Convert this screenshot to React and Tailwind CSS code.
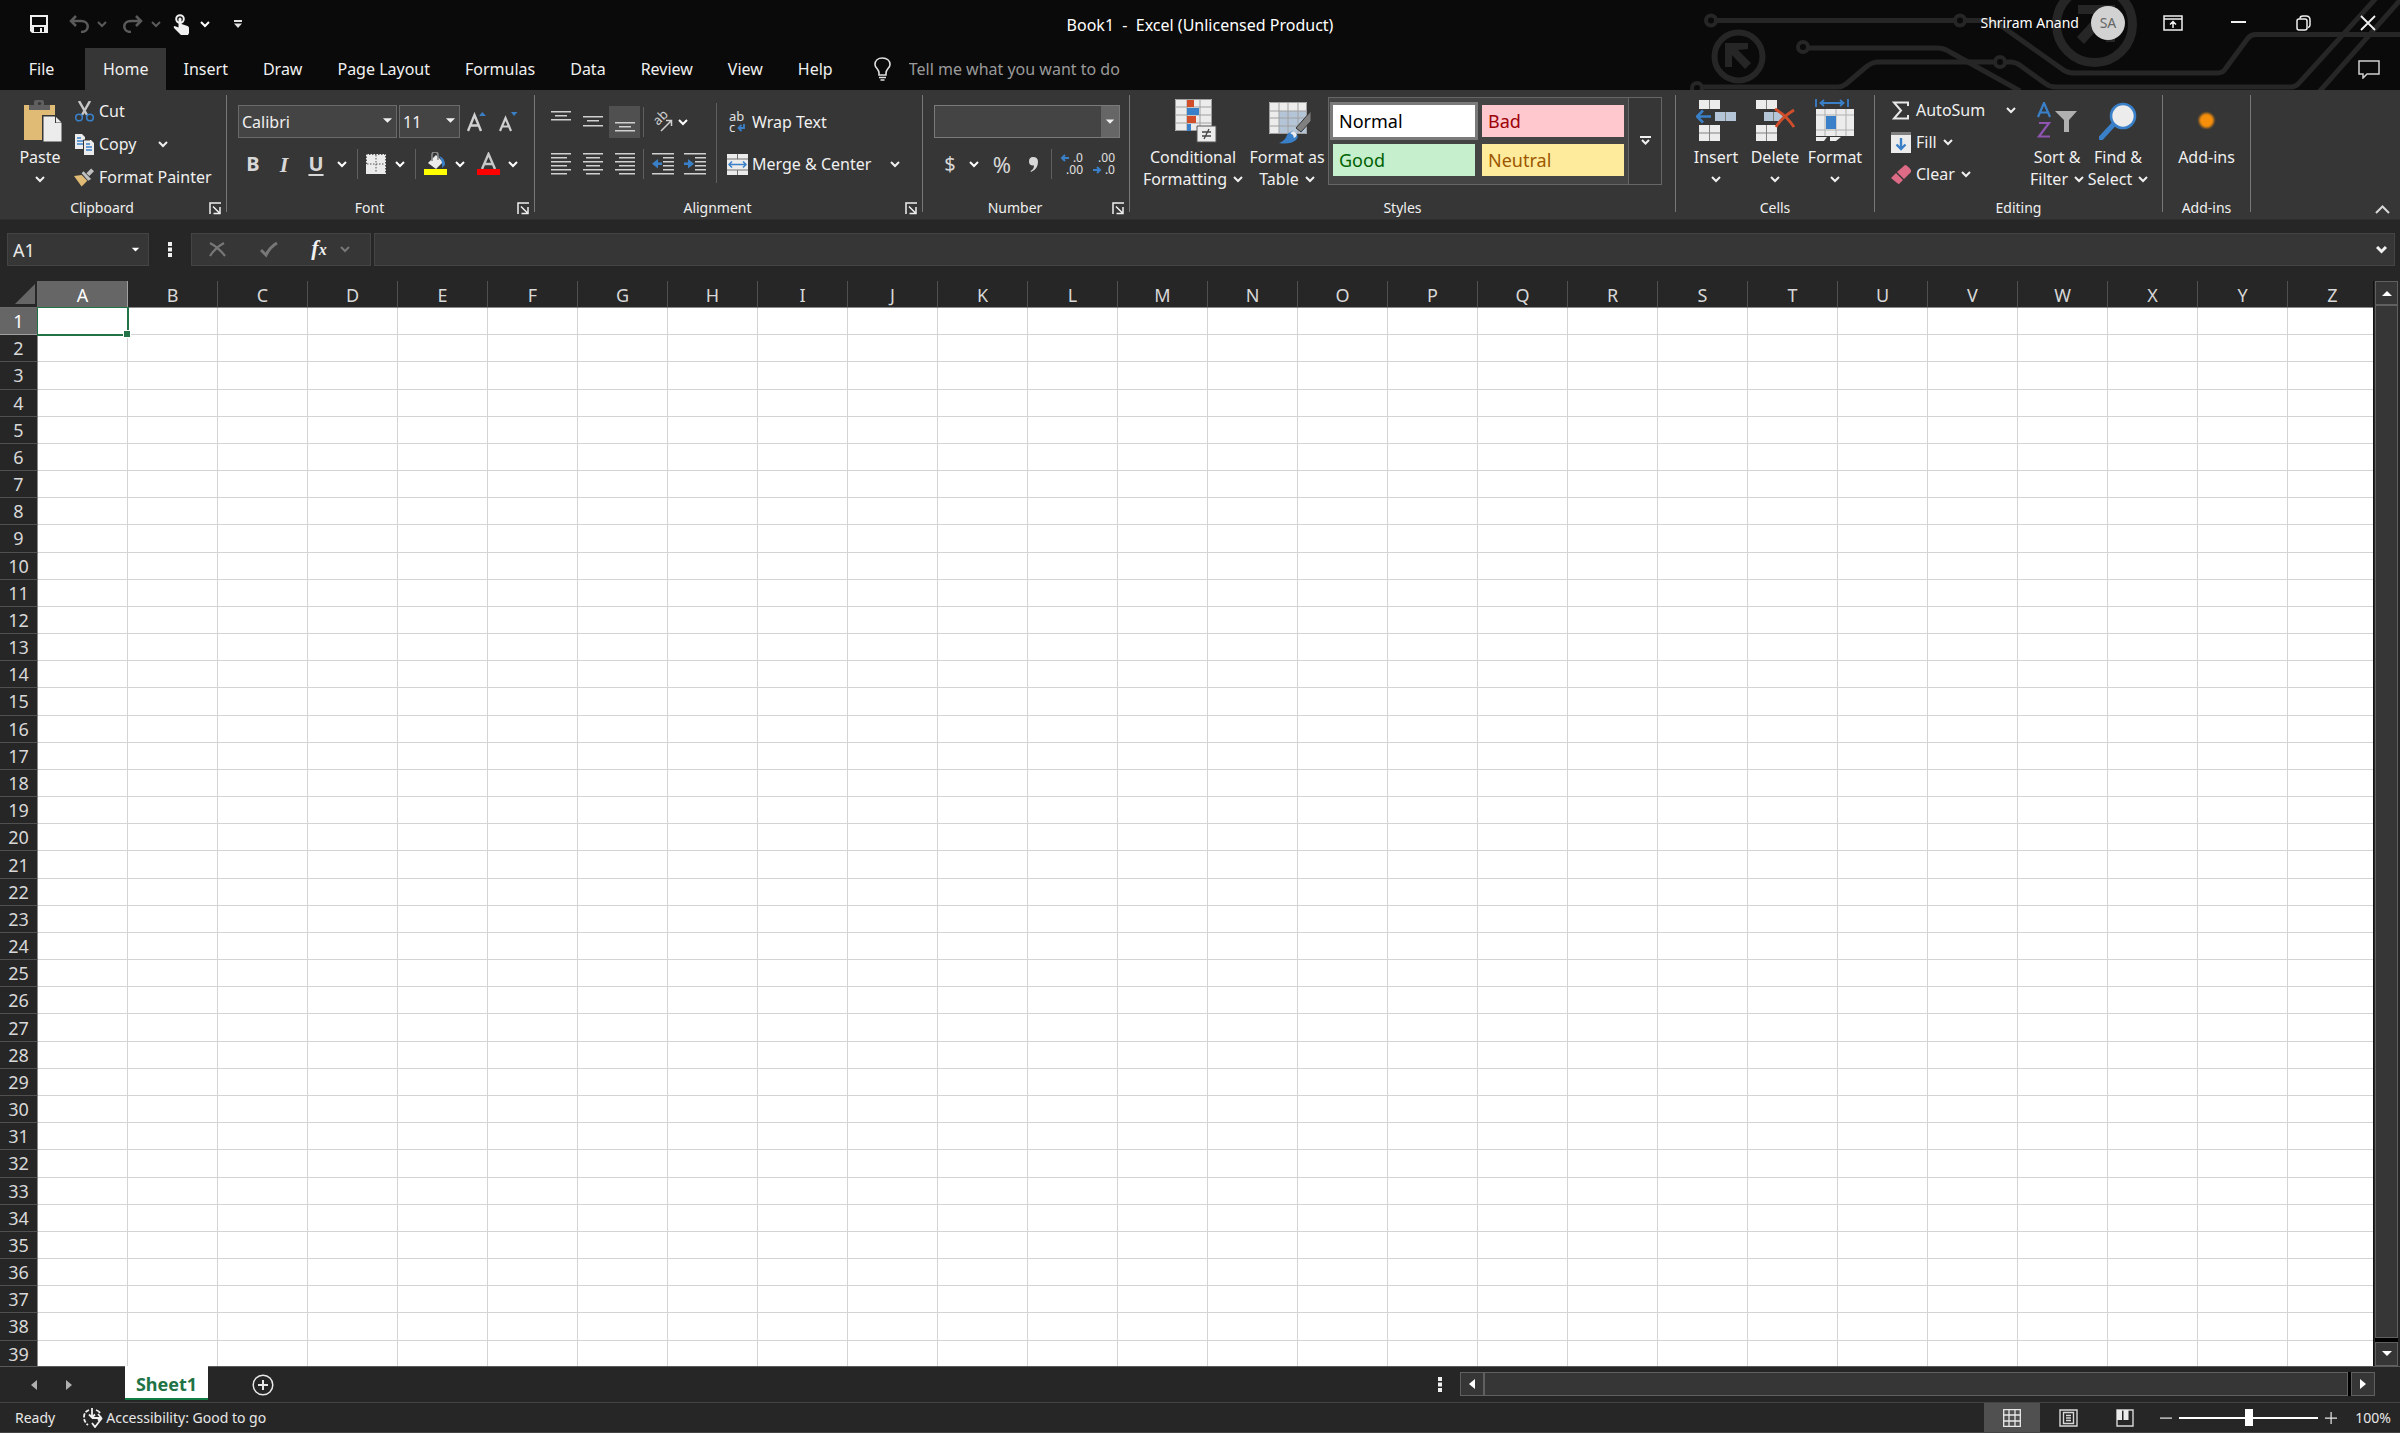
import { useState } from 'react'
import clsx from 'clsx'

const COLUMNS = 'ABCDEFGHIJKLMNOPQRSTUVWXYZ'.split('')
const ROWS = Array.from({ length: 39 }, (_, i) => i + 1)
const TABS = ['Home', 'Insert', 'Draw', 'Page Layout', 'Formulas', 'Data', 'Review', 'View', 'Help']

const cellStyles = [
  { name: 'Normal', className: 'bg-white text-black outline-3 outline-[#7a7a7a]' },
  { name: 'Bad', className: 'bg-[#ffc7ce] text-[#9c0006]' },
  { name: 'Good', className: 'bg-[#c6efce] text-[#006100]' },
  { name: 'Neutral', className: 'bg-[#ffeb9c] text-[#9c5700]' },
]

function Chevron({ className }) {
  return (
    <svg width="10" height="7" viewBox="0 0 10 7" className={clsx('shrink-0', className)} fill="none" stroke="currentColor" strokeWidth="2">
      <path d="M1 1l4 4 4-4" />
    </svg>
  )
}

function Triangle({ dir = 'down', className }) {
  const paths = {
    down: 'M1 3h10L6 8z',
    up: 'M1 9h10L6 4z',
    left: 'M9 1v10L3 6z',
    right: 'M3 1v10l6-5z',
  }
  return (
    <svg width="12" height="12" viewBox="0 0 12 12" className={className} fill="currentColor">
      <path d={paths[dir]} />
    </svg>
  )
}

function IconButton({ label, className, children }) {
  return (
    <button aria-label={label} className={clsx('flex shrink-0 items-center justify-center', className)}>
      {children}
    </button>
  )
}

function Circuit() {
  return (
    <svg width="710" height="90" viewBox="1690 0 710 90" className="pointer-events-none absolute right-0 top-0" fill="none" stroke="#262626" strokeWidth="5">
      <path d="M1717 20.500H1955M1966 20.500H1986Q1994 21 2000 25L2062 69Q2067 73 2074 73H2218Q2223 73 2226 68L2248 38Q2251 34.500 2256 34.500H2400" />
      <path d="M1809 48H1937Q1944 48 1950 52L2020 91" />
      <path d="M1703 87H1838Q1842 87 1846 84L1866 67Q1872 62 1878 62H1994M2006 62H2010Q2016 62 2021 66L2046 84Q2050 87 2056 87H2290Q2296 87 2299 83L2378 -4" />
      <path d="M2319 92L2402 -2" />
      <g strokeWidth="4">
        <circle cx="1711" cy="20.500" r="5" />
        <circle cx="1960" cy="20.500" r="5" />
        <circle cx="1803" cy="47" r="5" />
        <circle cx="2000" cy="62" r="5" />
        <circle cx="1697" cy="88" r="5" />
      </g>
      <circle cx="1738.500" cy="56.500" r="24" strokeWidth="6" />
      <circle cx="2094.500" cy="24.500" r="38" strokeWidth="9" />
      <path d="M1725 43h23v6l-10 1 13 13-6 6-13-14v12h-7z" fill="#262626" stroke="none" />
      <path d="M2078 5h37v37h-9V20l-22 24-7-7 21-23h-20z" fill="#262626" stroke="none" />
    </svg>
  )
}

function TitleBar() {
  return (
    <div className="relative grid h-12 grid-cols-[1fr_auto_1fr] items-center text-white">
      <div className="flex items-center pl-[30px]">
        <IconButton label="Save">
          <svg width="18" height="18" viewBox="0 0 18 18">
            <path d="M0 0h18v18H2l-2-2z" fill="#f0f0f0" />
            <path d="M2 2h14v8H2zM4 12h10v5h-2v-4h-2v4H4z" fill="#0a0a0a" />
          </svg>
        </IconButton>
        <IconButton label="Undo" className="ml-[21px] text-[#5a5a5a]">
          <svg width="20" height="18" viewBox="0 0 20 18" fill="none" stroke="currentColor" strokeWidth="2.500">
            <path d="M7 1L2 6l5 5M2 6h10c9 0 9 11 0 11" />
          </svg>
          <Chevron className="ml-2" />
        </IconButton>
        <IconButton label="Redo" className="ml-[16px] text-[#5a5a5a]">
          <svg width="20" height="18" viewBox="0 0 20 18" fill="none" stroke="currentColor" strokeWidth="2.500">
            <path d="M13 1l5 5-5 5M18 6H8C-1 6-1 17 8 17" />
          </svg>
          <Chevron className="ml-2" />
        </IconButton>
        <IconButton label="Touch/Mouse Mode" className="ml-[12px]">
          <svg width="16" height="21" viewBox="0 0 16 21">
            <circle cx="7" cy="5" r="3.800" fill="none" stroke="#f0f0f0" strokeWidth="2" />
            <path d="M5.500 5q0-1.500 1.500-1.500T8.500 5v5l6 2q1.500.6 1.500 2v5l-1 2H8L1 14q-1-1.500.5-2l4 1.500z" fill="#f0f0f0" />
          </svg>
          <Chevron className="ml-[11px]" />
        </IconButton>
        <IconButton label="Customize Quick Access Toolbar" className="ml-[24px]">
          <svg width="8" height="8" viewBox="0 0 8 8" fill="#e0e0e0">
            <path d="M0 0h8v2H0zM0 3.500h8L4 8z" />
          </svg>
        </IconButton>
      </div>
      <h1 className="whitespace-pre pt-[2px]">Book1  -  Excel (Unlicensed Product)</h1>
      <div className="flex h-[46px] items-center justify-end self-start pr-[24px] text-sm">
        <span>Shriram Anand</span>
        <span className="ml-[12px] flex size-[34px] items-center justify-center rounded-full bg-[#d2d2d2] text-[#666]">SA</span>
        <IconButton label="Ribbon Display Options" className="ml-[38px]">
          <svg width="20" height="16" viewBox="0 0 20 16" fill="none" stroke="#f0f0f0" strokeWidth="1.500">
            <path d="M1 1h18v14H1zM1 4h18M10 13V7M7 9.500L10 6.500l3 3" />
          </svg>
        </IconButton>
        <IconButton label="Minimize" className="ml-[48px]">
          <svg width="15" height="16" viewBox="0 0 15 16"><path d="M0 6h15v2H0z" fill="#f0f0f0" /></svg>
        </IconButton>
        <IconButton label="Restore" className="ml-[50px]">
          <svg width="15" height="16" viewBox="0 0 15 16" fill="none" stroke="#f0f0f0" strokeWidth="1.500">
            <rect x="1" y="4" width="10" height="11" rx="2" />
            <path d="M4 3.500Q4 1 7 1h3q4 0 4 4v5q0 2-2 2.500" />
          </svg>
        </IconButton>
        <IconButton label="Close" className="ml-[49px]">
          <svg width="16" height="16" viewBox="0 0 16 16" fill="none" stroke="#f0f0f0" strokeWidth="1.800">
            <path d="M1 1l14 14M15 1L1 15" />
          </svg>
        </IconButton>
      </div>
    </div>
  )
}

function TabBar({ active, onSelect }) {
  return (
    <nav className="relative flex h-[42px] items-center text-base text-[#f0f0f0]">
      <button className="h-full w-[85px] pr-[2px]">File</button>
      {TABS.map(tab => (
        <button
          key={tab}
          onClick={() => onSelect(tab)}
          className={clsx('h-full pl-[18px] pr-[17px]', tab === active && 'bg-[#363636]')}
        >
          {tab}
        </button>
      ))}
      <label htmlFor="tell-me" className="ml-[24px]" aria-label="Tell me what you want to do">
        <svg width="17" height="24" viewBox="0 0 17 24" fill="none" stroke="#e0e0e0" strokeWidth="1.600">
          <path d="M5 18v-2q0-2-2-4.500Q1 9.500 1 7.500C1 3.500 4 1 8.500 1S16 3.500 16 7.500q0 2-2 4-2 2.500-2 4.500v2zM5 20.500h7M6.500 23h4" />
        </svg>
      </label>
      <input
        id="tell-me"
        placeholder="Tell me what you want to do"
        className="ml-[18px] h-full w-[320px] bg-transparent outline-none placeholder:text-[#9a9a9a]"
      />
      <IconButton label="Comments" className="ml-auto mr-[20px]">
        <svg width="22" height="19" viewBox="0 0 22 19" fill="none" stroke="#d0d0d0" strokeWidth="1.500">
          <path d="M1 1h20v13H9l-4 4v-4H1z" />
        </svg>
      </IconButton>
    </nav>
  )
}

function Group({ label, launcher, className, children }) {
  return (
    <section aria-label={label} className={clsx('flex shrink-0', className)}>
      <div className="min-w-0 flex-1">
        <div className="flex h-[104px]">{children}</div>
        <div className="flex h-[18px] items-center text-sm">
          <span className="flex-1 text-center">{label}</span>
          {launcher && (
            <IconButton label={`${label} settings`} className="h-full w-[22px]">
              <svg width="12" height="13" viewBox="0 0 12 13" fill="none" stroke="#f0f0f0" strokeWidth="1.500">
                <path d="M1 12V1h11M4 4.500l6 6M11 5v6.500H4.500" />
              </svg>
            </IconButton>
          )}
        </div>
      </div>
      <div className="h-[117px] w-px bg-[#777]" />
    </section>
  )
}

function SmallButton({ icon, label, chevron, className }) {
  return (
    <button className={clsx('flex items-center whitespace-nowrap', className)}>
      <span className="flex w-[20px] justify-center">{icon}</span>
      <span className="ml-[5px]">{label}</span>
      {chevron && <Chevron className={chevron} />}
    </button>
  )
}

function BigButton({ icon, lines, className }) {
  return (
    <button className={clsx('flex shrink-0 flex-col items-center leading-[22px]', className)}>
      <span className="flex h-[51px] items-center">{icon}</span>
      <span className="whitespace-nowrap">{lines[0]}</span>
      <span className="flex h-[22px] items-center gap-[6px] whitespace-nowrap">
        {lines[1]}
        {lines[1] !== undefined && <Chevron />}
      </span>
    </button>
  )
}

function Separator({ className }) {
  return <span className={clsx('w-px shrink-0 bg-[#606060]', className)} />
}

function Lines({ rows, className }) {
  // rows: [x, width, y]
  return (
    <svg width="20" height="22" viewBox="0 0 20 22" className={className} fill="#d0d0d0">
      {rows.map(([x, w, y]) => (
        <rect key={y} x={x} y={y} width={w} height="1.500" />
      ))}
    </svg>
  )
}

const alignRows = {
  top: [[0, 20, 0], [4, 12, 4], [0, 20, 8]],
  middle: [[0, 20, 5], [4, 12, 9], [0, 20, 14]],
  bottom: [[0, 20, 11], [4, 12, 15], [0, 20, 19]],
  left: [[0, 20, 0], [0, 16, 4], [0, 20, 8], [0, 16, 12], [0, 20, 16], [0, 16, 20]],
  center: [[0, 20, 0], [3, 14, 4], [0, 20, 8], [3, 14, 12], [0, 20, 16], [3, 14, 20]],
  right: [[0, 20, 0], [4, 16, 4], [0, 20, 8], [4, 16, 12], [0, 20, 16], [4, 16, 20]],
}

function IndentIcon({ flip }) {
  return (
    <svg width="22" height="22" viewBox="0 0 22 22">
      <g fill="#d0d0d0">
        <path d="M0 0h22v1.500H0zM11 4h11v1.500H11zM11 8h11v1.500H11zM11 12h11v1.500H11zM11 16h11v1.500H11zM0 20h22v1.500H0z" />
      </g>
      <path d={flip ? 'M0 9.500h4V6l6 4.800-6 4.700V12H0z' : 'M10 9.500H6V6L0 10.800l6 4.700V12h4z'} fill="#3a80c8" />
    </svg>
  )
}

function Clipboard() {
  return (
    <Group label="Clipboard" launcher className="w-[227px]">
      <BigButton
        className="ml-[17px] w-[46px]"
        lines={['Paste', '']}
        icon={
          <svg width="38" height="42" viewBox="0 0 38 42" className="ml-[6px]">
            <path d="M0 5h31v35H0z" fill="#e0bb75" />
            <path d="M5 5h5V2q0-2 2-2h6q2 0 2 2v3h6v5H5z" fill="#5f5f5f" />
            <circle cx="15.500" cy="3.500" r="1.600" fill="#363636" />
            <path d="M18 15h14l6 7v20H18z" fill="#363636" />
            <path d="M19.500 16.500h11.500v6.500h6.500v18.500h-18z" fill="#ececec" />
            <path d="M32 17l5.500 5.500H32z" fill="#ececec" />
          </svg>
        }
      />
      <div className="ml-[11px] flex flex-col gap-[9px] pt-1">
        <SmallButton
          className="h-6"
          label="Cut"
          icon={
            <svg width="19" height="21" viewBox="0 0 19 21" fill="none">
              <path d="M4 0l8 14M15 0L7 14" stroke="#c8c8c8" strokeWidth="2.500" />
              <circle cx="4" cy="16.500" r="3.300" stroke="#3a80c8" strokeWidth="1.600" />
              <circle cx="15" cy="16.500" r="3.300" stroke="#3a80c8" strokeWidth="1.600" />
            </svg>
          }
        />
        <SmallButton
          className="h-6"
          label="Copy"
          chevron="ml-[22px]"
          icon={
            <svg width="19" height="21" viewBox="0 0 19 21">
              <path d="M0 0h7l3 3v12H0zM9 6h7l3 3v12H9z" fill="#ececec" />
              <path d="M2 4h4M2 7h6M2 10h6M11 10h4M11 13h6M11 16h6" stroke="#3a80c8" strokeWidth="1.400" />
              <path d="M8.500 15V6H15" stroke="#363636" fill="none" />
            </svg>
          }
        />
        <SmallButton
          className="h-6"
          label="Format Painter"
          icon={
            <svg width="21" height="19" viewBox="0 0 21 19">
              <path d="M0 8l8-1 6 6-6 6z" fill="#e0bb75" />
              <path d="M8 5l2-2 8 8-3 2zM13 5l5-5 3 3-5 5z" fill="#c0c0c0" />
            </svg>
          }
        />
      </div>
    </Group>
  )
}

function FontGroup() {
  return (
    <Group label="Font" launcher className="w-[308px]">
      <div className="flex flex-col pl-[11px] pt-[10px]">
        <div className="flex h-[33px] items-center">
          <div className="relative h-full w-[159px]">
            <select aria-label="Font" className="size-full appearance-none border border-[#6a6a6a] bg-[#444] px-[3px] outline-none">
              <option>Calibri</option>
            </select>
            <Triangle className="pointer-events-none absolute right-1 top-[10px] w-[11px]" />
          </div>
          <div className="relative ml-[2px] h-full w-[61px]">
            <select aria-label="Font size" className="size-full appearance-none border border-[#6a6a6a] bg-[#444] px-[3px] outline-none">
              <option>11</option>
            </select>
            <Triangle className="pointer-events-none absolute right-1 top-[10px] w-[11px]" />
          </div>
          <IconButton label="Increase Font Size" className="ml-[7px]">
            <svg width="19" height="20" viewBox="0 0 19 20">
              <path d="M1 19L7.500 3 14 19M3.500 13.500h8" fill="none" stroke="#d0d0d0" strokeWidth="2.400" />
              <path d="M12 4l3.300-4L19 4z" fill="#3a80c8" />
            </svg>
          </IconButton>
          <IconButton label="Decrease Font Size" className="ml-[13px]">
            <svg width="19" height="20" viewBox="0 0 19 20">
              <path d="M1 19L6.500 6 12 19M3.500 14.500h6" fill="none" stroke="#d0d0d0" strokeWidth="2.200" />
              <path d="M12 0h6.500L15 4z" fill="#3a80c8" />
            </svg>
          </IconButton>
        </div>
        <div className="mt-[11px] flex h-[30px] items-center text-[#d8d8d8]">
          <IconButton label="Bold" className="ml-[4px] w-[22px] text-xl font-bold">B</IconButton>
          <IconButton label="Italic" className="ml-[8px] w-[24px] font-['Liberation_Serif',serif] text-[22px] font-bold italic">I</IconButton>
          <IconButton label="Underline" className="ml-[9px] w-[22px] text-xl font-bold underline underline-offset-3">U</IconButton>
          <Chevron className="ml-[10px] text-white" />
          <Separator className="ml-[10px] h-[30px]" />
          <IconButton label="Borders" className="ml-[8px] text-white">
            <svg width="20" height="20" viewBox="0 0 20 20">
              <path d="M0 0h20v20H0z" fill="#ececec" />
              <path d="M.5 10V.5h19v19M10 1v17M1 10h18" fill="none" stroke="#555" strokeDasharray="1.500 1.500" />
            </svg>
            <Chevron className="ml-[9px]" />
          </IconButton>
          <Separator className="ml-[10px] h-[30px]" />
          <IconButton label="Fill Color" className="ml-[8px] text-white">
            <svg width="23" height="24" viewBox="0 0 23 24">
              <path d="M4 11l8-8 7 7-7 7z" fill="#ececec" />
              <path d="M8 9V3q0-3 3-3t3 3v5" fill="none" stroke="#8a8a8a" strokeWidth="1.600" />
              <path d="M15 4q6 2 6 9l-3 3q1-6-3-12z" fill="#3a80c8" />
              <path d="M0 17h23v6H0z" fill="#ff0" />
            </svg>
            <Chevron className="ml-[8px]" />
          </IconButton>
          <IconButton label="Font Color" className="ml-[12px] text-white">
            <svg width="23" height="24" viewBox="0 0 23 24">
              <path d="M5 17L11.500 2 18 17M7.500 12h8" fill="none" stroke="#c8c8c8" strokeWidth="2.400" />
              <path d="M0 17h23v6H0z" fill="#f00" />
            </svg>
            <Chevron className="ml-[8px]" />
          </IconButton>
        </div>
      </div>
    </Group>
  )
}

function Alignment() {
  return (
    <Group label="Alignment" launcher className="w-[388px]">
      <div className="flex flex-col gap-[11px] pl-[10px] pt-[11px]">
        <div className="flex h-[32px] items-center">
          <IconButton label="Top Align" className="w-[32px]"><Lines rows={alignRows.top} /></IconButton>
          <IconButton label="Middle Align" className="w-[32px]"><Lines rows={alignRows.middle} /></IconButton>
          <IconButton label="Bottom Align" className="h-full w-[31px] bg-[#505050]"><Lines rows={alignRows.bottom} /></IconButton>
          <Separator className="ml-[3px] h-[30px]" />
          <IconButton label="Orientation" className="ml-[9px] text-white">
            <svg width="20" height="22" viewBox="0 0 20 22" className="overflow-visible">
              <text transform="translate(5 15) rotate(-45)" fontSize="13" fill="#d0d0d0">ab</text>
              <path d="M8 20L18 10M13 9.500h5.500V15" fill="none" stroke="#d0d0d0" strokeWidth="1.500" />
            </svg>
            <Chevron className="ml-[5px]" />
          </IconButton>
        </div>
        <div className="flex h-[30px] items-center">
          <IconButton label="Align Left" className="w-[32px]"><Lines rows={alignRows.left} /></IconButton>
          <IconButton label="Center" className="w-[32px]"><Lines rows={alignRows.center} /></IconButton>
          <IconButton label="Align Right" className="w-[31px]"><Lines rows={alignRows.right} /></IconButton>
          <Separator className="ml-[3px] h-[30px]" />
          <IconButton label="Decrease Indent" className="ml-[8px]"><IndentIcon /></IconButton>
          <IconButton label="Increase Indent" className="ml-[10px]"><IndentIcon flip /></IconButton>
        </div>
      </div>
      <Separator className="ml-[10px] mt-[8px] h-[80px]" />
      <div className="flex flex-col items-start gap-[18px] pl-[10px] pt-[15px]">
        <SmallButton
          className="h-6"
          label="Wrap Text"
          icon={
            <svg width="16" height="21" viewBox="0 0 16 21" className="overflow-visible">
              <text x="0" y="9" fontSize="13" fill="#e0e0e0">ab</text>
              <text x="0" y="20" fontSize="13" fill="#e0e0e0">c</text>
              <path d="M15 12v4H10M12.500 13l-3 3 3 3" fill="none" stroke="#3a80c8" strokeWidth="1.800" />
            </svg>
          }
        />
        <SmallButton
          className="h-6"
          label="Merge & Center"
          chevron="ml-[19px]"
          icon={
            <svg width="21" height="21" viewBox="0 0 21 21" className="shrink-0">
              <path d="M0 0h21v21H0z" fill="#ececec" />
              <path d="M0 5h21M0 16h21M10.500 0v5M10.500 16v5" stroke="#707070" />
              <path d="M2 10.500h17M5 7.500l-3 3 3 3M16 7.500l3 3-3 3" fill="none" stroke="#3a80c8" strokeWidth="1.500" />
            </svg>
          }
        />
      </div>
    </Group>
  )
}

function DecimalIcon({ top, bottom, arrow }) {
  return (
    <svg width="22" height="22" viewBox="0 0 22 22" fontSize="12" fill="#e0e0e0" className="overflow-visible">
      <text x="22" y="9" textAnchor="end">{top}</text>
      <text x="22" y="21" textAnchor="end">{bottom}</text>
      <path d={arrow} fill="none" stroke="#3a80c8" strokeWidth="2" />
    </svg>
  )
}

function NumberGroup() {
  return (
    <Group label="Number" launcher className="w-[207px]">
      <div className="flex flex-col pl-[11px] pt-[10px]">
        <div className="relative h-[33px] w-[186px]">
          <select aria-label="Number Format" className="size-full appearance-none border border-[#7a7a7a] bg-[#444] outline-none">
            <option></option>
          </select>
          <span className="pointer-events-none absolute inset-y-px right-px flex w-[18px] items-center justify-center bg-[#666]">
            <Triangle className="w-[10px]" />
          </span>
        </div>
        <div className="mt-[11px] flex h-[30px] items-center text-[#d8d8d8]">
          <IconButton label="Accounting Number Format" className="w-[32px] text-xl">$</IconButton>
          <Chevron className="ml-[3px] text-white" />
          <IconButton label="Percent Style" className="ml-[12px] w-[22px] text-[22px]">%</IconButton>
          <IconButton label="Comma Style" className="ml-[16px]">
            <svg width="9" height="15" viewBox="0 0 9 15"><path d="M4 0q5 0 5 5 0 7-7 10l-.5-1Q5 12 5 8.500 0 9 0 4.500 0 0 4 0z" fill="#d8d8d8" /></svg>
          </IconButton>
          <Separator className="ml-[13px] h-[30px]" />
          <IconButton label="Increase Decimal" className="ml-[9px]">
            <DecimalIcon top=".0" bottom=".00" arrow="M8 5H1M4 2L1 5l3 3" />
          </IconButton>
          <IconButton label="Decrease Decimal" className="ml-[10px]">
            <DecimalIcon top=".00" bottom=".0" arrow="M0 17h7M4 14l3 3-3 3" />
          </IconButton>
        </div>
      </div>
    </Group>
  )
}

function Styles() {
  return (
    <Group label="Styles" className="w-[546px]">
      <BigButton
        className="ml-[9px] w-[108px]"
        lines={['Conditional', 'Formatting']}
        icon={
          <svg width="42" height="44" viewBox="0 0 42 44" className="ml-[6px]">
            <path d="M0 0h37v32H0z" fill="#ececec" />
            <path d="M0 8h37M0 16h37M0 24h37M12 0v32M25 0v32M.5.500h36v31H.5z" stroke="#a0a0a0" fill="none" />
            <path d="M12 1h7v7h-7zM12 17h9v7h-9z" fill="#d04f2a" />
            <path d="M12 9h12v7H12zM12 25h4v7h-4z" fill="#3a80c8" />
            <path d="M22 27h19v16H22z" fill="#ececec" stroke="#555" />
            <path d="M27 33h9M27 37h9M34 30l-5 10" stroke="#444" strokeWidth="1.300" />
          </svg>
        }
      />
      <BigButton
        className="ml-[2px] w-[76px]"
        lines={['Format as', 'Table']}
        icon={
          <svg width="42" height="42" viewBox="0 0 42 42" className="ml-[6px] mt-1">
            <path d="M0 0h38v32H0z" fill="#ececec" />
            <path d="M10 9h28v23H10z" fill="#b5c5d8" />
            <path d="M0 9h38M0 16h38M0 24h38M10 0v32M19 0v32M29 0v32M.5.500h37v31H.5z" stroke="#a0a0a0" fill="none" />
            <path d="M42 9v10L32 30l-5-4z" fill="#808080" stroke="#363636" />
            <path d="M10 41q6-2 8-8 3-5 8-3 5 4 1 8-6 5-17 3z" fill="#3a80c8" />
            <path d="M21 31q4-3 6 0 2 3-2 5l-1-3z" fill="#ececec" />
          </svg>
        }
      />
      <div className="ml-[3px] mt-[2px] flex h-[88px] border border-[#666] bg-[#444]">
        <div className="grid grid-cols-[142px_142px] content-start gap-x-[7px] gap-y-[7px] p-[7px] pl-[4px] pr-[4px]">
          {cellStyles.map(style => (
            <button key={style.name} className={clsx('h-[32px] px-[6px] text-left text-lg leading-8', style.className)}>
              {style.name}
            </button>
          ))}
        </div>
        <IconButton label="More Styles" className="w-[33px] border-l border-[#666] bg-[#363636]">
          <svg width="11" height="10" viewBox="0 0 11 10" fill="none" stroke="#f0f0f0" strokeWidth="2">
            <path d="M0 1h11M2 4l3.500 3.500L9 4" />
          </svg>
        </IconButton>
      </div>
    </Group>
  )
}

function Cells() {
  return (
    <Group label="Cells" className="w-[199px]">
      <BigButton
        className="ml-[13px] w-[54px]"
        lines={['Insert', '']}
        icon={
          <svg width="40" height="42" viewBox="0 0 40 42">
            <path d="M3 0h21v9H3zM3 25h21v16H3z" fill="#ececec" />
            <path d="M19 12h21v9H19z" fill="#b5c5d8" />
            <path d="M13.500 0v9M13.500 25v16M3 33h21M29.500 12v9" stroke="#808080" />
            <path d="M15 16.500H1M7 10.500l-6 6 6 6" fill="none" stroke="#3a80c8" strokeWidth="2.600" />
          </svg>
        }
      />
      <BigButton
        className="ml-[3px] w-[58px]"
        lines={['Delete', '']}
        icon={
          <svg width="40" height="42" viewBox="0 0 40 42" className="ml-[2px]">
            <path d="M0 0h21v9H0zM0 25h21v16H0z" fill="#ececec" />
            <path d="M8 12h15l4 4.500-4 4.500H8z" fill="#b5c5d8" />
            <path d="M10.500 0v9M10.500 25v16M0 33h21M17.500 12v9" stroke="#808080" />
            <path d="M19 9q11 6 19 18M38 10Q25 18 20 27" fill="none" stroke="#d04f2a" strokeWidth="2.800" />
          </svg>
        }
      />
      <BigButton
        className="w-[62px]"
        lines={['Format', '']}
        icon={
          <svg width="40" height="43" viewBox="0 0 40 43">
            <path d="M1 10h38v27H1zM1 38h11l-3 4H1zM15 38h11l-5 4h-6z" fill="#ececec" />
            <path d="M1 16h38M1 31h38M10 10v27M21 10v27M31 10v27" stroke="#b0b0b0" />
            <path d="M11 17h10v13H11z" fill="#3a80c8" />
            <path d="M1 0v8M33 0v8M6 4h22M9 1L5.500 4 9 7M25 1l3.500 3L25 7" fill="none" stroke="#3a80c8" strokeWidth="1.800" />
          </svg>
        }
      />
    </Group>
  )
}

function Editing() {
  return (
    <Group label="Editing" className="w-[288px]">
      <div className="flex flex-col items-start gap-[8px] pl-[16px] pt-[3px]">
        <SmallButton
          className="h-6"
          label="AutoSum"
          chevron="ml-[21px]"
          icon={
            <svg width="18" height="19" viewBox="0 0 18 19" fill="none" stroke="#e8e8e8" strokeWidth="2">
              <path d="M16 5V1.500H2l7 8-7 8h14V14" />
            </svg>
          }
        />
        <SmallButton
          className="h-6"
          label="Fill"
          chevron="ml-[6px]"
          icon={
            <svg width="20" height="21" viewBox="0 0 20 21">
              <path d="M0 0h20v21H0z" fill="#ececec" />
              <path d="M0 0h20v3H0z" fill="#808080" />
              <path d="M10 6v11M5.500 12.500L10 17l4.500-4.500" fill="none" stroke="#3a80c8" strokeWidth="2.400" />
            </svg>
          }
        />
        <SmallButton
          className="h-6"
          label="Clear"
          chevron="ml-[6px]"
          icon={
            <svg width="20" height="19" viewBox="0 0 20 19" fill="#dd6b85">
              <path d="M14 0q2 0 6 5v2l-7 7-7-7zM5 8l7 7-4 4q-1 0-8-6z" />
            </svg>
          }
        />
      </div>
      <BigButton
        className="ml-auto w-[60px]"
        lines={['Sort &', 'Filter']}
        icon={
          <svg width="40" height="37" viewBox="0 0 40 37">
            <path d="M1 15L7 1l6 14M3 10.500h8" fill="none" stroke="#3a80c8" strokeWidth="2.200" />
            <path d="M2 21h10L2 34.500h11" fill="none" stroke="#8d54b0" strokeWidth="2.200" />
            <path d="M18 9h22l-8 9v12h-5V18z" fill="#b0b0b0" />
          </svg>
        }
      />
      <BigButton
        className="mr-[13px] w-[62px]"
        lines={['Find &', 'Select']}
        icon={
          <svg width="38" height="38" viewBox="0 0 38 38">
            <path d="M2 36l12-13" stroke="#3a80c8" strokeWidth="5" strokeLinecap="round" />
            <circle cx="24" cy="14" r="12" fill="#ececec" stroke="#3a80c8" strokeWidth="2.600" />
          </svg>
        }
      />
    </Group>
  )
}

function Ribbon() {
  return (
    <div className="flex h-[130px] shrink-0 overflow-hidden border-b border-[#2e2e2e] bg-[#363636] pt-[5px] text-base text-[#f0f0f0]">
      <Clipboard />
      <FontGroup />
      <Alignment />
      <NumberGroup />
      <Styles />
      <Cells />
      <Editing />
      <Group label="Add-ins" className="w-[88px]">
        <BigButton
          className="w-full"
          lines={['Add-ins']}
          icon={<span className="size-[15px] rounded-full bg-[#f78f0a] blur-[1px]" />}
        />
      </Group>
      <IconButton label="Collapse the Ribbon" className="mb-[5px] ml-auto mr-[10px] self-end">
        <svg width="15" height="9" viewBox="0 0 15 9" fill="none" stroke="#d8d8d8" strokeWidth="2">
          <path d="M1 8l6.500-6.500L14 8" />
        </svg>
      </IconButton>
    </div>
  )
}

function Dots() {
  return (
    <svg width="4" height="15" viewBox="0 0 4 15" fill="#f0f0f0">
      <path d="M0 0h4v4H0zM0 5.500h4v4H0zM0 11h4v4H0z" />
    </svg>
  )
}

function FormulaBar({ cell }) {
  return (
    <div className="flex h-[61px] shrink-0 items-start pl-[7px] pr-[5px] pt-[13px] text-[#e8e8e8]">
      <div className="flex h-[33px] w-[142px] items-center border border-[#444] bg-[#363636] text-lg">
        <input aria-label="Name Box" defaultValue={cell} className="h-full w-[123px] bg-transparent px-[5px] outline-none" />
        <IconButton label="Cell names"><Triangle className="w-[9px] text-white" /></IconButton>
      </div>
      <div className="flex h-[33px] w-[42px] items-center justify-center"><Dots /></div>
      <div className="flex h-[33px] w-[180px] items-center border border-[#444] bg-[#363636] text-[#777]">
        <IconButton label="Cancel" className="ml-[17px]">
          <svg width="17" height="15" viewBox="0 0 17 15" fill="none" stroke="currentColor" strokeWidth="2.200">
            <path d="M1 1q9 5 15 13M15 1Q6 6 1 14" />
          </svg>
        </IconButton>
        <IconButton label="Enter" className="ml-[34px]">
          <svg width="18" height="16" viewBox="0 0 18 16" fill="none" stroke="currentColor" strokeWidth="3">
            <path d="M1 8l5 5Q10 5 17 1" />
          </svg>
        </IconButton>
        <IconButton label="Insert Function" className="ml-[32px] w-[18px] pb-1 font-['Liberation_Serif',serif] text-[22px] font-bold italic text-[#f0f0f0]">
          f<span className="pt-1 text-base">x</span>
        </IconButton>
        <Chevron className="ml-[12px]" />
      </div>
      <div className="ml-[3px] flex h-[33px] flex-1 items-center border border-[#444] bg-[#363636]">
        <input aria-label="Formula Bar" className="h-full flex-1 bg-transparent px-2 outline-none" />
        <IconButton label="Expand Formula Bar" className="mr-[7px]">
          <svg width="11" height="8" viewBox="0 0 11 8" fill="none" stroke="#f0f0f0" strokeWidth="3"><path d="M1 1l4.500 4.500L10 1" /></svg>
        </IconButton>
      </div>
    </div>
  )
}

function Sheet() {
  return (
    <div className="min-w-0 flex-1 overflow-hidden bg-white">
      <table className="h-[1087px] w-[2378px] table-fixed border-separate border-spacing-0 text-lg leading-6">
        <thead>
          <tr className="h-[27px] bg-[#262626] text-[#d8d8d8]">
            <th aria-label="Select all" className="w-[38px] border-b border-r border-[#6a6a6a] p-0">
              <svg width="20" height="20" viewBox="0 0 20 20" className="ml-auto mr-[2px]"><path d="M20 0v20H0z" fill="#666" /></svg>
            </th>
            {COLUMNS.map(col => (
              <th
                key={col}
                scope="col"
                className={clsx(
                  'border-b border-r p-0 pt-[2px] font-normal',
                  col === 'A' ? 'border-b-[#217346] border-r-[#a0a0a0] bg-[#666] text-white' : 'border-b-[#8a8a8a] border-r-[#505050]'
                )}
              >
                {col}
              </th>
            ))}
          </tr>
        </thead>
        <tbody>
          {ROWS.map(row => (
            <tr key={row}>
              <th
                scope="row"
                className={clsx(
                  'border-b border-r p-0 font-normal',
                  row === 1 ? 'border-b-[#a0a0a0] border-r-[#217346] bg-[#666] text-white' : 'border-b-[#505050] border-r-[#8a8a8a] bg-[#262626] text-[#d8d8d8]'
                )}
              >
                {row}
              </th>
              {COLUMNS.map(col =>
                row === 1 && col === 'A' ? (
                  <td key={col} className="relative border-b border-r border-[#217346] p-0 outline outline-[#217346]">
                    <span className="absolute -bottom-[3px] -right-[3px] size-[6px] bg-[#217346] outline outline-white" />
                  </td>
                ) : (
                  <td key={col} className="border-b border-r border-[#d4d4d4] p-0" />
                )
              )}
            </tr>
          ))}
        </tbody>
      </table>
    </div>
  )
}

function VerticalScroll() {
  return (
    <div className="flex w-[27px] shrink-0 flex-col border-l border-[#111] pl-px pr-[2px] text-white">
      <IconButton label="Scroll up" className="h-[24px] border border-[#606060] bg-[#363636]"><Triangle dir="up" /></IconButton>
      <div className="flex-1 border border-[#606060] bg-[#363636]" />
      <div className="h-[4px] bg-black" />
      <IconButton label="Scroll down" className="h-[24px] border border-[#606060] bg-[#363636]"><Triangle /></IconButton>
    </div>
  )
}

function SheetTabs() {
  return (
    <div className="flex h-[36px] shrink-0 border-t border-[#5a5a5a] text-white">
      <div className="flex w-[125px] items-center pl-[28px] text-[#b0b0b0]">
        <IconButton label="Previous sheet"><Triangle dir="left" /></IconButton>
        <IconButton label="Next sheet" className="ml-[23px]"><Triangle dir="right" /></IconButton>
      </div>
      <button className="-mt-px h-[34px] w-[83px] border-b-2 border-[#107c41] bg-white pt-[3px] text-lg font-bold text-[#217346]">Sheet1</button>
      <IconButton label="New sheet" className="ml-[44px]">
        <svg width="22" height="22" viewBox="0 0 22 22" fill="none" stroke="#e8e8e8" strokeWidth="1.500">
          <circle cx="11" cy="11" r="9.800" />
          <path d="M11 6v10M6 11h10" strokeWidth="2" />
        </svg>
      </IconButton>
      <div className="ml-auto flex items-center pr-[18px]"><Dots /></div>
      <div className="mt-[5px] flex h-[24px] w-[915px]">
        <IconButton label="Scroll left" className="w-[24px] border border-[#606060] bg-[#363636]"><Triangle dir="left" /></IconButton>
        <div className="flex-1 border border-[#606060] bg-[#363636]" />
        <div className="w-[3px] bg-black" />
        <IconButton label="Scroll right" className="w-[24px] border border-[#606060] bg-[#363636]"><Triangle dir="right" /></IconButton>
      </div>
      <div className="w-[25px]" />
    </div>
  )
}

function StatusBar() {
  const [zoom, setZoom] = useState(100)

  return (
    <div className="flex h-[31px] shrink-0 items-center border-b border-t border-[#444] pl-[15px] pr-[9px] text-sm text-[#e8e8e8]">
      <span>Ready</span>
      <button className="ml-[28px] flex items-center gap-[3px]">
        <svg width="20" height="20" viewBox="0 0 20 20" fill="none" stroke="#f0f0f0" strokeWidth="1.800">
          <path d="M6 2Q1 4 1 9t4 8" strokeDasharray="4 1.500" />
          <path d="M9 0v9M6 6.500L9 9.500l3-3M9 10h9M15 6l3 3.500-3 3M13 2q3 1 4 3M9 15l3 4 7-9" />
        </svg>
        Accessibility: Good to go
      </button>
      <IconButton label="Normal" className="ml-auto h-full w-[56px] bg-[#505050]">
        <svg width="18" height="18" viewBox="0 0 18 18" fill="none" stroke="#e8e8e8" strokeWidth="1.300">
          <path d="M.7.700h16.600v16.600H.7zM6 0v18M12 0v18M0 6h18M0 12h18" />
        </svg>
      </IconButton>
      <IconButton label="Page Layout" className="h-full w-[56px]">
        <svg width="19" height="18" viewBox="0 0 19 18" fill="none" stroke="#d8d8d8" strokeWidth="1.400">
          <path d="M1 1h17v16H1zM4.500 3.500h10v11h-10zM7 6.500h5M7 9h5M7 11.500h5" />
        </svg>
      </IconButton>
      <IconButton label="Page Break Preview" className="h-full w-[57px]">
        <svg width="18" height="18" viewBox="0 0 18 18">
          <path d="M1 1h16v16H1z" fill="none" stroke="#d8d8d8" strokeWidth="1.400" />
          <path d="M1 1h5v10H1zM7.500 1h5v10h-5z" fill="#ececec" />
        </svg>
      </IconButton>
      <IconButton label="Zoom out" className="ml-[7px]">
        <svg width="12" height="12" viewBox="0 0 12 12"><path d="M0 5.500h12v1.200H0z" fill="#e8e8e8" /></svg>
      </IconButton>
      <input
        type="range"
        aria-label="Zoom"
        min="10"
        max="190"
        value={zoom}
        onChange={e => setZoom(Number(e.target.value))}
        className="ml-[7px] h-[17px] w-[139px] appearance-none bg-transparent [&::-webkit-slider-runnable-track]:h-[2px] [&::-webkit-slider-runnable-track]:bg-white [&::-webkit-slider-thumb]:-mt-[8px] [&::-webkit-slider-thumb]:h-[17px] [&::-webkit-slider-thumb]:w-[8px] [&::-webkit-slider-thumb]:appearance-none [&::-webkit-slider-thumb]:bg-white"
      />
      <IconButton label="Zoom in" className="ml-[7px]">
        <svg width="12" height="12" viewBox="0 0 12 12"><path d="M0 5.500h12v1.200H0zM5.500 0h1.200v12H5.500z" fill="#e8e8e8" /></svg>
      </IconButton>
      <span className="w-[54px] text-right">{zoom}%</span>
    </div>
  )
}

export default function App() {
  const [tab, setTab] = useState('Home')

  return (
    <div className="flex h-screen flex-col overflow-hidden bg-[#262626] font-['Noto_Sans','Open_Sans',sans-serif]">
      <header className="relative shrink-0 bg-[#0a0a0a]">
        <Circuit />
        <TitleBar />
        <TabBar active={tab} onSelect={setTab} />
      </header>
      <Ribbon />
      <FormulaBar cell="A1" />
      <div className="flex min-h-0 flex-1">
        <Sheet />
        <VerticalScroll />
      </div>
      <SheetTabs />
      <StatusBar />
    </div>
  )
}
